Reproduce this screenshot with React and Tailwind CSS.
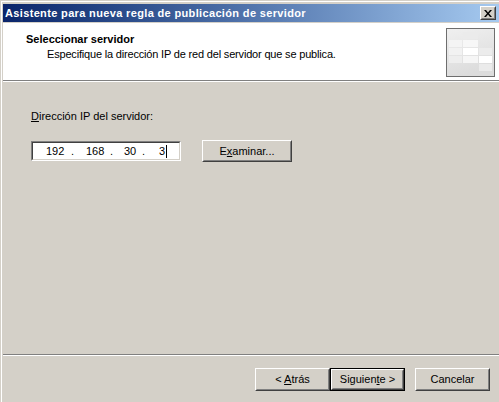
function Raised({ children, className = "", def = false }) {
  return (
    <div className={`${def ? "border border-black" : ""} ${className}`}>
      <div className="h-full w-full border border-t-white border-l-white border-r-[#404040] border-b-[#404040]">
        <div className="h-full w-full border border-t-[#d4d0c8] border-l-[#d4d0c8] border-r-[#808080] border-b-[#808080] flex items-center justify-center bg-[#d4d0c8]">
          {children}
        </div>
      </div>
    </div>
  );
}

function WizardIcon() {
  return (
    <svg width="49" height="49" viewBox="0 0 49 49">
      <defs>
        <linearGradient id="g" x1="0" y1="0" x2="0.3" y2="1">
          <stop offset="0" stopColor="#f0f0f0" />
          <stop offset="1" stopColor="#dcdcdc" />
        </linearGradient>
      </defs>
      <rect x="0.5" y="0.5" width="48" height="48" fill="url(#g)" stroke="#6e6e6e" />
      <rect x="17" y="4" width="15" height="7" fill="#ebebeb" />
      <rect x="3" y="12" width="13" height="7" fill="#f4f4f4" />
      <rect x="17" y="12" width="15" height="7" fill="#f7f7f7" />
      <rect x="3" y="20" width="13" height="7" fill="#f2f2f2" />
      <rect x="17" y="20" width="15" height="7" fill="#ffffff" />
      <rect x="33" y="20" width="13" height="7" fill="#ececec" />
      <rect x="3" y="28" width="13" height="7" fill="#eeeeee" />
      <rect x="17" y="28" width="15" height="7" fill="#f6f6f6" />
      <rect x="33" y="28" width="13" height="7" fill="#ffffff" />
      <rect x="33" y="36" width="13" height="7" fill="#ebebeb" />
    </svg>
  );
}

export default function App() {
  return (
    <div className="w-[499px] h-[402px] overflow-hidden bg-[#d4d0c8] font-['Liberation_Sans',Arial,sans-serif] text-[11px] leading-[13px] text-black">
      <div className="h-full border-l border-t border-[#d4d0c8]">
        <div className="h-full border-l border-t border-white pl-px pt-[2px] flex flex-col">
          {/* barra de título */}
          <div className="h-[18px] shrink-0 flex items-center pl-[2px] pr-[3px] bg-linear-to-r from-[#0a246a] to-[#a6caf0]">
            <span className="font-bold text-white whitespace-nowrap tracking-[0.35px]">
              Asistente para nueva regla de publicación de servidor
            </span>
            <Raised className="ml-auto w-[16px] h-[14px]">
              <svg width="8" height="7" viewBox="0 0 8 7">
                <path d="M0 0h2l2 2.5L6 0h2L5 3.5 8 7H6L4 4.5 2 7H0l3-3.5z" fill="#000" />
              </svg>
            </Raised>
          </div>
          <div className="h-px shrink-0" />

          {/* cabecera blanca */}
          <div className="h-[57px] shrink-0 bg-white flex">
            <div className="pl-[23px] pt-[10px]">
              <div className="font-bold whitespace-nowrap">Seleccionar servidor</div>
              <div className="pl-[21px] pt-[2px] whitespace-nowrap tracking-[-0.18px]">
                Especifique la dirección IP de red del servidor que se publica.
              </div>
            </div>
            <div className="ml-auto mr-[4px] mt-[5px]">
              <WizardIcon />
            </div>
          </div>
          <div className="h-px shrink-0 bg-[#808080]" />
          <div className="h-px shrink-0 bg-white" />

          {/* cuerpo */}
          <div className="h-[272px] shrink-0 pl-[28px] pt-[28px]">
            <div className="whitespace-nowrap">
              <u>D</u>irección IP del servidor:
            </div>
            <div className="flex items-center mt-[17px]">
              <div className="w-[150px] h-[20px] border border-t-[#808080] border-l-[#808080] border-r-white border-b-white">
                <div className="h-full w-full border border-t-[#404040] border-l-[#404040] border-r-[#d4d0c8] border-b-[#d4d0c8] bg-white flex items-center pl-px">
                  <span className="w-[37px] pl-[12px]">192</span>
                  <span className="w-[2px]">.</span>
                  <span className="w-[37px] pl-[13px]">168</span>
                  <span className="w-[2px]">.</span>
                  <span className="w-[30px] pl-[12px]">30</span>
                  <span className="w-[2px]">.</span>
                  <span className="w-[34px] pl-[15px] flex items-center">
                    3<span className="inline-block w-px h-[13px] bg-black ml-px" />
                  </span>
                </div>
              </div>
              <Raised className="ml-[21px] w-[90px] h-[22px]">
                <span>
                  E<u>x</u>aminar...
                </span>
              </Raised>
            </div>
          </div>
          <div className="h-px shrink-0 bg-[#808080]" />
          <div className="h-px shrink-0 bg-white" />

          {/* botones */}
          <div className="flex justify-end pr-[9px] pt-[12px]">
            <Raised className="w-[75px] h-[23px]">
              <span>
                &lt; <u>A</u>trás
              </span>
            </Raised>
            <Raised def className="w-[75px] h-[23px]">
              <span>
                Siguien<u>t</u>e &gt;
              </span>
            </Raised>
            <Raised className="ml-[10px] w-[75px] h-[23px]">
              <span>Cancelar</span>
            </Raised>
          </div>
        </div>
      </div>
    </div>
  );
}
